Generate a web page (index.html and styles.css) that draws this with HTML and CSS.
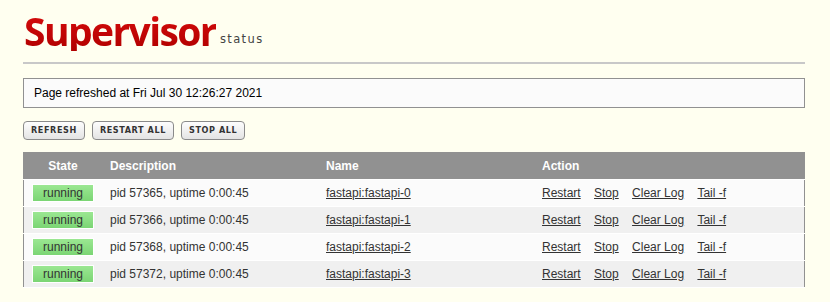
FILE: index.html
```html
<!DOCTYPE html>
<html lang="en">
<head>
  <meta charset="UTF-8">
  <title>Supervisor Status</title>
  <link rel="stylesheet" href="styles.css">
</head>
<body>
  <div id="wrapper">
    <div id="header">
      <span class="logo">Supervisor</span><span class="logo-sub">status</span>
    </div>

    <div class="status_msg">Page refreshed at Fri Jul 30 12:26:27 2021</div>

    <ul id="buttons">
      <li><a href="#" class="btn">Refresh</a></li>
      <li><a href="#" class="btn">Restart All</a></li>
      <li><a href="#" class="btn">Stop All</a></li>
    </ul>

    <table>
      <thead>
        <tr>
          <th class="state">State</th>
          <th class="desc">Description</th>
          <th class="name">Name</th>
          <th class="action">Action</th>
        </tr>
      </thead>
      <tbody>
        <tr>
          <td class="status"><span class="status_running">running</span></td>
          <td>pid 57365, uptime 0:00:45</td>
          <td><a href="#">fastapi:fastapi-0</a></td>
          <td class="action"><ul><li><a href="#">Restart</a></li> <li><a href="#">Stop</a></li> <li><a href="#">Clear Log</a></li> <li><a href="#">Tail -f</a></li></ul></td>
        </tr>
        <tr class="shade">
          <td class="status"><span class="status_running">running</span></td>
          <td>pid 57366, uptime 0:00:45</td>
          <td><a href="#">fastapi:fastapi-1</a></td>
          <td class="action"><ul><li><a href="#">Restart</a></li> <li><a href="#">Stop</a></li> <li><a href="#">Clear Log</a></li> <li><a href="#">Tail -f</a></li></ul></td>
        </tr>
        <tr>
          <td class="status"><span class="status_running">running</span></td>
          <td>pid 57368, uptime 0:00:45</td>
          <td><a href="#">fastapi:fastapi-2</a></td>
          <td class="action"><ul><li><a href="#">Restart</a></li> <li><a href="#">Stop</a></li> <li><a href="#">Clear Log</a></li> <li><a href="#">Tail -f</a></li></ul></td>
        </tr>
        <tr class="shade">
          <td class="status"><span class="status_running">running</span></td>
          <td>pid 57372, uptime 0:00:45</td>
          <td><a href="#">fastapi:fastapi-3</a></td>
          <td class="action"><ul><li><a href="#">Restart</a></li> <li><a href="#">Stop</a></li> <li><a href="#">Clear Log</a></li> <li><a href="#">Tail -f</a></li></ul></td>
        </tr>
      </tbody>
    </table>
  </div>
</body>
</html>
```

FILE: styles.css
```css
body, td, th, a {
  font: 12px/18px 'Liberation Sans', Arial, sans-serif;
  color: #333;
}

html, body, ul {
  margin: 0;
  padding: 0;
}

body {
  background-color: #fffff0;
}

#wrapper {
  padding: 0 25px 0 23px;
}

#header {
  height: 51px;
  padding-top: 11px;
  border-bottom: 2px solid #c8c8c8;
  margin-bottom: 14px;
  white-space: nowrap;
}

.logo {
  display: inline-block;
  margin-left: 1px;
  font: bold 39px/40px 'Open Sans', sans-serif;
  letter-spacing: -1.6px;
  color: #c00000;
  background: linear-gradient(#d80c0c, #b00000);
  -webkit-background-clip: text;
  background-clip: text;
  -webkit-text-fill-color: transparent;
}

.logo-sub {
  display: inline-block;
  margin-left: 4px;
  font: 11.5px/11px 'DejaVu Sans', sans-serif;
  letter-spacing: 1.4px;
  color: #444;
  vertical-align: 3px;
}

.status_msg {
  padding: 5px 10px;
  border: 1px solid #919191;
  background-color: #fbfbfb;
  color: #000;
}

#buttons {
  list-style: none;
  display: flex;
  gap: 7px;
  margin: 13px 0 12px;
}

.btn {
  display: block;
  height: 17px;
  padding: 0 7px;
  border: 1px solid #8a8a8a;
  border-radius: 4px;
  background: linear-gradient(#fdfdfd, #e4e4e4);
  font: bold 9px/17px 'DejaVu Sans Condensed', 'DejaVu Sans', sans-serif;
  font-stretch: condensed;
  letter-spacing: 0.6px;
  text-transform: uppercase;
  text-decoration: none;
  color: #333;
}

table {
  width: 100%;
  border: 1px solid #919191;
  border-collapse: collapse;
}

th, td {
  padding: 4px 8px;
  border-bottom: 1px solid #fff;
  text-align: left;
}

th {
  background-color: #919191;
  color: #fff;
  font-weight: bold;
}

th.state {
  width: 62px;
  text-align: center;
}

th.desc, th.name {
  width: 200px;
}

tr td {
  background-color: #fbfbfb;
}

tr.shade td {
  background-color: #f0f0f0;
}

td.status {
  text-align: center;
}

td.status span {
  display: block;
  width: 60px;
  height: 16px;
  margin: 0 auto;
  border: 1px solid #fff;
  font-size: 12px;
  line-height: 16px;
  text-align: center;
}

.status_running {
  background: linear-gradient(#9be792, #7bd574);
}

.action ul {
  list-style: none;
  display: inline;
}

.action li {
  display: inline;
  margin-right: 10px;
}
```
